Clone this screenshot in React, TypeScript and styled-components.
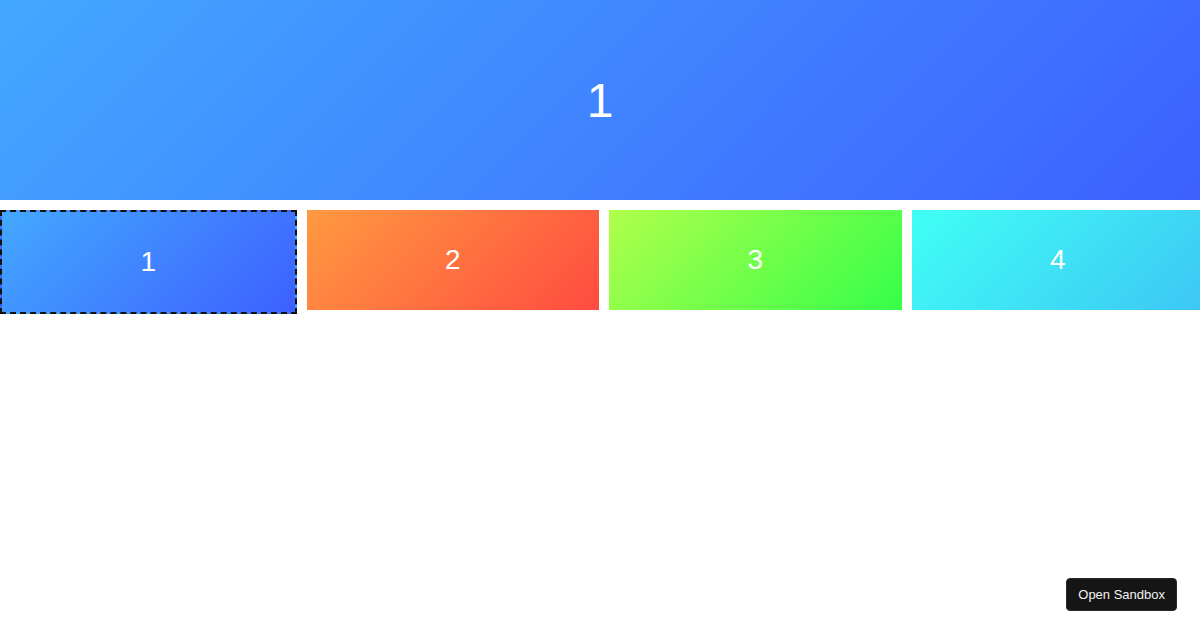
import React from "react";
import styled, { createGlobalStyle } from "styled-components";

const Global = createGlobalStyle`
  html, body { margin: 0; padding: 0; background: #fff; }
  body { font-family: "Liberation Sans", Arial, sans-serif; overflow: hidden; }
`;

const gradients = [
  "linear-gradient(135deg, #43a8ff, #3d60ff)",
  "linear-gradient(135deg, #ff9a40, #ff4b40)",
  "linear-gradient(135deg, #b0ff4a, #35ff4a)",
  "linear-gradient(135deg, #40fff5, #3dc6f5)",
];

const Page = styled.div`
  width: 1200px;
  height: 630px;
  position: relative;
  overflow: hidden;
`;

const MainSlide = styled.div<{ $bg: string }>`
  height: 200px;
  background: ${(p) => p.$bg};
  display: flex;
  align-items: center;
  justify-content: center;
  color: #fff;
  font-size: 48px;
`;

const ThumbRow = styled.div`
  display: flex;
  gap: 10px;
  margin-top: 10px;
  width: 1220px;
`;

const Thumb = styled.div<{ $bg: string; $active?: boolean }>`
  flex: 0 0 292.5px;
  height: 100px;
  background: ${(p) => p.$bg};
  display: flex;
  align-items: center;
  justify-content: center;
  color: #fff;
  font-size: 28px;
  border: ${(p) => (p.$active ? "2px dashed #111" : "none")};
`;

const SandboxButton = styled.button`
  position: absolute;
  right: 23px;
  bottom: 19px;
  height: 33px;
  padding: 0 11px;
  background: #151515;
  color: #f2f2f2;
  border: 1px solid #2a2a2a;
  border-radius: 4px;
  font-family: "Liberation Sans", Arial, sans-serif;
  font-size: 13px;
  cursor: pointer;
`;

export default function App() {
  return (
    <Page>
      <Global />
      <MainSlide $bg={gradients[0]}>1</MainSlide>
      <ThumbRow>
        {gradients.map((g, i) => (
          <Thumb key={i} $bg={g} $active={i === 0}>
            {i + 1}
          </Thumb>
        ))}
      </ThumbRow>
      <SandboxButton>Open Sandbox</SandboxButton>
    </Page>
  );
}
